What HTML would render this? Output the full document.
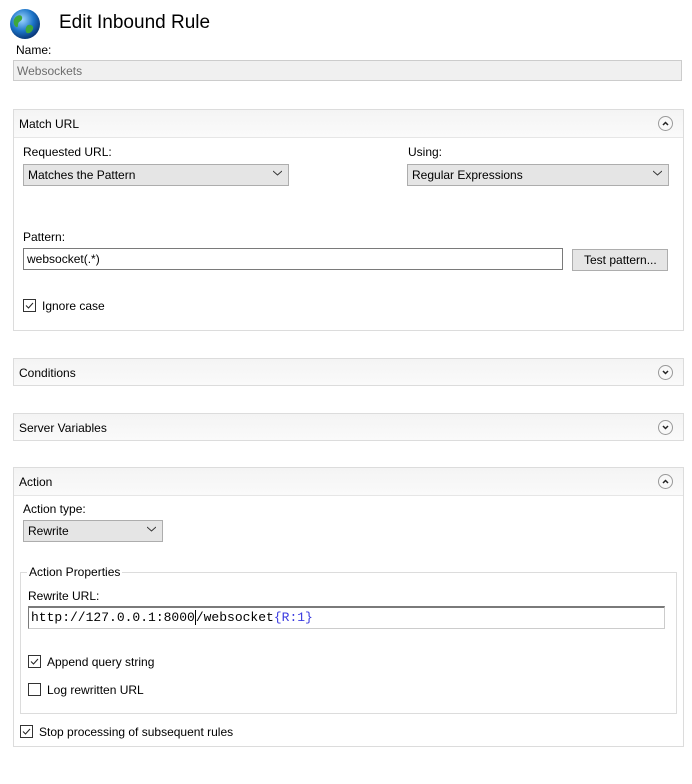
<!DOCTYPE html><html><head><style>
body{margin:0;width:692px;height:784px;background:#fff;font-family:"Liberation Sans",sans-serif;font-size:12px;color:#000;position:relative;overflow:hidden}
.a{position:absolute}
.panel{position:absolute;left:13px;width:669px;border:1px solid #dcdcdc;background:#fff}
.hdr{height:27px;background:linear-gradient(#f4f4f4,#fafafa);border-bottom:1px solid #e6e6e6;position:relative}
.hdr span{position:absolute;left:5px;top:7px}
.btn{position:absolute;right:10px;top:6px;width:13px;height:13px;border:1px solid #999;border-radius:50%;background:#f8f8f8}
.sel{position:absolute;background:#e5e5e5;border:1px solid #adadad;height:20px;box-sizing:border-box}
.sel span{position:absolute;left:4px;top:3px}
.chev{position:absolute;right:6px;top:5px}
.cb{position:absolute;width:11px;height:11px;border:1px solid #333;background:#fff}
.inp{position:absolute;border:1px solid #7a7a7a;background:#fff;box-sizing:border-box}
</style></head><body>
<svg class="a" style="left:9px;top:8px" width="32" height="32" viewBox="0 0 32 32"><defs><radialGradient id="g" cx="40%" cy="35%" r="65%"><stop offset="0" stop-color="#9fd8ff"/><stop offset=".6" stop-color="#1c74c8"/><stop offset="1" stop-color="#0a3a7a"/></radialGradient></defs><circle cx="16" cy="16" r="15" fill="url(#g)"/><path d="M8 8c3-2 6 0 5 3s-4 2-4 6-3 2-4-1 0-6 3-8zM19 17c3-1 6 1 5 4s-4 5-6 4-2-6 1-8z" fill="#3da83a"/></svg>
<div class="a" style="left:59px;top:12px;font-size:19px">Edit Inbound Rule</div>
<div class="a" style="left:16px;top:43px">Name:</div>
<div class="a" style="left:13px;top:60px;width:669px;height:21px;border:1px solid #ccc;background:#f0f0f0;box-sizing:border-box"><span class="a" style="left:3px;top:3px;color:#6d6d6d">Websockets</span></div>

<div class="panel" style="top:109px;height:220px"><div class="hdr"><span>Match URL</span><div class="btn"><svg width="13" height="13"><path d="M4 8l2.5-2.5L9 8" stroke="#222" stroke-width="1.5" fill="none"/></svg></div></div></div>
<div class="a" style="left:23px;top:145px">Requested URL:</div>
<div class="sel" style="left:23px;top:164px;width:266px;height:22px"><span>Matches the Pattern</span><svg class="chev" width="9" height="6"><path d="M0 1l4.5 4L9 1" stroke="#333" fill="none"/></svg></div>
<div class="a" style="left:408px;top:145px">Using:</div>
<div class="sel" style="left:407px;top:164px;width:262px;height:22px"><span>Regular Expressions</span><svg class="chev" width="9" height="6"><path d="M0 1l4.5 4L9 1" stroke="#333" fill="none"/></svg></div>
<div class="a" style="left:23px;top:230px">Pattern:</div>
<div class="inp" style="left:23px;top:248px;width:540px;height:22px"><span class="a" style="left:3px;top:3px">websocket(.*)</span></div>
<div class="sel" style="left:572px;top:249px;width:96px;height:22px"><span style="left:11px">Test pattern...</span></div>
<div class="cb" style="left:23px;top:299px"><svg width="11" height="11" class="a"><path d="M2 5.5l2.5 2.5L9 3" stroke="#222" fill="none"/></svg></div>
<div class="a" style="left:42px;top:299px">Ignore case</div>

<div class="panel" style="top:358px;height:26px"><div class="hdr" style="border:0;height:26px"><span>Conditions</span><div class="btn"><svg width="13" height="13"><path d="M4 5l2.5 2.5L9 5" stroke="#222" stroke-width="1.5" fill="none"/></svg></div></div></div>
<div class="panel" style="top:413px;height:26px"><div class="hdr" style="border:0;height:26px"><span>Server Variables</span><div class="btn"><svg width="13" height="13"><path d="M4 5l2.5 2.5L9 5" stroke="#222" stroke-width="1.5" fill="none"/></svg></div></div></div>

<div class="panel" style="top:467px;height:278px"><div class="hdr"><span>Action</span><div class="btn"><svg width="13" height="13"><path d="M4 8l2.5-2.5L9 8" stroke="#222" stroke-width="1.5" fill="none"/></svg></div></div></div>
<div class="a" style="left:23px;top:502px">Action type:</div>
<div class="sel" style="left:23px;top:520px;width:140px;height:22px"><span>Rewrite</span><svg class="chev" width="9" height="6"><path d="M0 1l4.5 4L9 1" stroke="#333" fill="none"/></svg></div>
<div class="a" style="left:20px;top:572px;width:655px;height:140px;border:1px solid #dcdcdc"></div>
<div class="a" style="left:27px;top:565px;background:#fff;padding:0 2px">Action Properties</div>
<div class="a" style="left:28px;top:589px">Rewrite URL:</div>
<div class="a" style="left:28px;top:606px;width:637px;height:23px;border:1px solid #ccc;border-top:2px solid #7a7a7a;border-left:1px solid #7a7a7a;box-sizing:border-box;font-family:'Liberation Mono',monospace;font-size:13px"><span class="a" style="left:2px;top:2px">http://127.0.0.1:8000<span style="border-left:1px solid #000"></span>/websocket<span style="color:#3a3ae0">{R:1}</span></span></div>
<div class="cb" style="left:28px;top:655px"><svg width="11" height="11" class="a"><path d="M2 5.5l2.5 2.5L9 3" stroke="#222" fill="none"/></svg></div>
<div class="a" style="left:47px;top:655px">Append query string</div>
<div class="cb" style="left:28px;top:683px"></div>
<div class="a" style="left:47px;top:683px">Log rewritten URL</div>
<div class="cb" style="left:20px;top:725px"><svg width="11" height="11" class="a"><path d="M2 5.5l2.5 2.5L9 3" stroke="#222" fill="none"/></svg></div>
<div class="a" style="left:39px;top:725px">Stop processing of subsequent rules</div>
</body></html>
